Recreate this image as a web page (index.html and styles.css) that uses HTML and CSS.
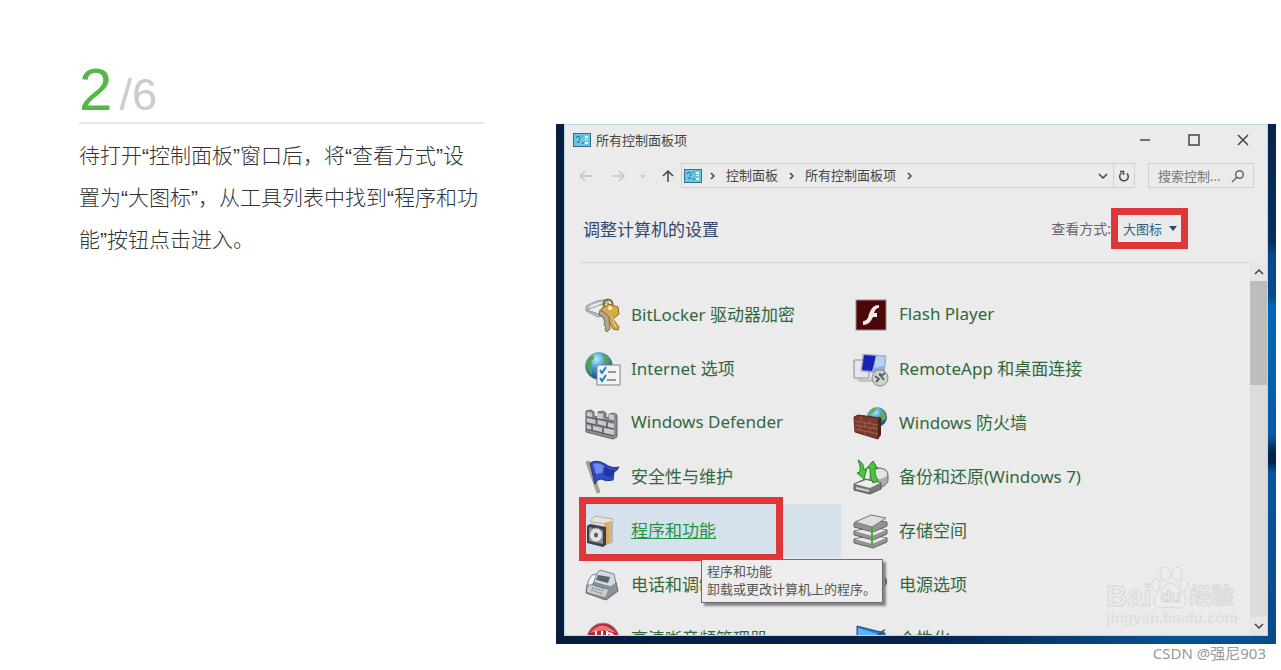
FILE: index.html
```html
<!DOCTYPE html>
<html lang="zh-CN">
  <head>
    <meta charset="UTF-8" />
    <meta name="viewport" content="width=device-width, initial-scale=1.0" />
    <title>2/6 控制面板</title>
    <link rel="stylesheet" href="styles.css">
  </head>
  <body>
    <main class="step">
      <section class="step-text">
        <h1 class="step-number">2<span>/6</span></h1>
        <p>待打开“控制面板”窗口后，将“查看方式”设置为“大图标”，从工具列表中找到“程序和功能”按钮点击进入。</p>
      </section>

      <figure class="step-figure">
        <div class="desktop">
          <div class="window">
            <header class="titlebar">
              <svg class="panel-icon" viewBox="0 0 18 14">
                <rect x=".5" y=".5" width="17" height="13" fill="#6cc5e2" stroke="#356f8c" />
                <path d="M3 5a2 2 0 1 1 3 2M4 9h3M9 3h1M9 10h2" stroke="#175b80" fill="none" />
                <path d="M12 3h3v2h-3zM12 6h3v1h-3zM12 9h3v2h-3z" fill="#e2f7fc" />
              </svg>
              <h2>所有控制面板项</h2>
              <div class="window-buttons">
                <button aria-label="最小化"><svg viewBox="0 0 12 12"><path d="M1 6h10" /></svg></button>
                <button aria-label="最大化"><svg viewBox="0 0 12 12"><path d="M1 1h10v10H1z" /></svg></button>
                <button aria-label="关闭"><svg viewBox="0 0 12 12"><path d="M1 1l10 10M11 1L1 11" /></svg></button>
              </div>
            </header>

            <div class="toolbar">
              <div class="history">
                <button class="off" aria-label="后退"><svg viewBox="0 0 14 14"><path d="M13 7H1M6 2L1 7l5 5" /></svg></button>
                <button class="off" aria-label="前进"><svg viewBox="0 0 14 14"><path d="M1 7h12M8 2l5 5-5 5" /></svg></button>
                <button class="off recent" aria-label="最近"><svg viewBox="0 0 6 14"><path d="M1 6l2 2 2-2" /></svg></button>
                <button aria-label="向上"><svg viewBox="0 0 14 14"><path d="M7 13V2M2 7l5-5 5 5" /></svg></button>
              </div>
              <div class="address">
                <svg class="panel-icon" viewBox="0 0 18 14">
                  <rect x=".5" y=".5" width="17" height="13" fill="#6cc5e2" stroke="#356f8c" />
                  <path d="M3 5a2 2 0 1 1 3 2M4 9h3M9 3h1M9 10h2" stroke="#175b80" fill="none" />
                  <path d="M12 3h3v2h-3zM12 6h3v1h-3zM12 9h3v2h-3z" fill="#e2f7fc" />
                </svg>
                <nav class="crumbs">
                  <svg class="chev" viewBox="0 0 5 8"><path d="M1 1l3 3-3 3" /></svg>
                  <a href="#">控制面板</a>
                  <svg class="chev" viewBox="0 0 5 8"><path d="M1 1l3 3-3 3" /></svg>
                  <a href="#">所有控制面板项</a>
                  <svg class="chev" viewBox="0 0 5 8"><path d="M1 1l3 3-3 3" /></svg>
                </nav>
                <button class="drop" aria-label="历史记录"><svg viewBox="0 0 12 12"><path d="M2 4l4 4 4-4" /></svg></button>
                <button class="refresh" aria-label="刷新"><svg viewBox="0 0 12 12"><path d="M9 3.500A4.300 4.300 0 1 1 3.500 3M2 1.500h3.500V5" /></svg></button>
              </div>
              <label class="search">
                <input type="text" placeholder="搜索控制..." aria-label="搜索控制面板">
                <svg viewBox="0 0 14 14"><circle cx="8.500" cy="5.500" r="3.800" /><path d="M5.800 8.200L1 13" /></svg>
              </label>
            </div>

            <div class="heading">
              <h3>调整计算机的设置</h3>
              <label for="view">查看方式:</label>
              <div class="view-box">
                <select id="view">
                  <option>大图标</option>
                </select>
                <svg viewBox="0 0 8 5"><path d="M0 0h8L4 5z" /></svg>
              </div>
            </div>

            <div class="content">
              <ul class="items">
                <li>
                  <a href="#">
                    <svg viewBox="0 0 36 36">
                      <path d="M3 8Q14 2 22 3l2 3Q12 8 2 13l12 4 8-2-1 4-8 1L1 14V9z" fill="#b9bbbd" stroke="#85888b" stroke-width=".7" />
                      <path d="M5 9Q13 5 20 5L5 11z" fill="#f0f0f0" />
                      <circle cx="23" cy="7" r="4.500" fill="none" stroke="#80682c" stroke-width="2" />
                      <path d="M16 12l8-5 9 3 1 7-6 5 6 8-1 3-5-1-5-10-7-3z" fill="#d3aa4c" stroke="#8b6722" />
                      <path d="M20 16l4 4 1 12-3 3-2-2 1-3-2-2 1-3-2-5-4-2 1-5z" fill="#b5a78a" stroke="#79694d" />
                      <circle cx="25" cy="11" r="2" fill="#fff0b0" />
                      <path d="M27 20l4 10" stroke="#f5da83" />
                    </svg>
                    <span>BitLocker 驱动器加密</span>
                  </a>
                </li>
                <li>
                  <a href="#">
                    <svg viewBox="0 0 36 36">
                      <rect x="3" y="3" width="30" height="30" fill="#4d070b" stroke="#a28889" />
                      <path d="M26 8c-6 0-8 4-10 9-1 5-3 7-6 7v4c6 0 8-4 10-8h4v-4h-3c1-3 2-5 5-5z" fill="#f2e8e5" />
                    </svg>
                    <span>Flash Player</span>
                  </a>
                </li>
                <li>
                  <a href="#">
                    <svg viewBox="0 0 36 36">
                      <defs>
                        <radialGradient id="globe" cx=".4" cy=".25" r=".8">
                          <stop offset="0" stop-color="#b7ecff" />
                          <stop offset=".45" stop-color="#3d96c6" />
                          <stop offset="1" stop-color="#123d78" />
                        </radialGradient>
                      </defs>
                      <circle cx="14" cy="15" r="13.500" fill="url(#globe)" stroke="#5f839a" stroke-width=".5" />
                      <path d="M2 11q2-5 6-7l1 4-3 2 1 4-3 2 3 3v5q-6-6-5-13zM18 3l5 3 2 5-4 1-2-3 1-2-3-2z" fill="#58a33e" />
                      <path d="M12 14h23v20H12z" fill="#f3f4f5" stroke="#7c8287" />
                      <path d="M15 19l2 3 4-6M15 27l2 3 4-6" fill="none" stroke="#1d7cc2" stroke-width="2" />
                      <path d="M23 21h8M22 29h9" stroke="#73777b" stroke-width="1.500" />
                    </svg>
                    <span>Internet 选项</span>
                  </a>
                </li>
                <li>
                  <a href="#">
                    <svg viewBox="0 0 36 36">
                      <path d="M1 9h15v18H1z" fill="#e4e6ec" stroke="#8b8d96" />
                      <path d="M3 28h18l4 3H6z" fill="#c1c3c9" />
                      <path d="M10 3l23 2-2 18-23-3z" fill="#8fa9df" stroke="#a9afbb" />
                      <path d="M11 4l12 1-4 15-10-1z" fill="#1822b5" />
                      <path d="M23 5l9 1-1 9-10 2z" fill="#b9d1f4" />
                      <circle cx="27" cy="27" r="8" fill="#d1d2cd" stroke="#888b85" />
                      <path d="M22 25l4 3-3 3M32 22l-4 3 3 4M27 22v3" fill="none" stroke="#555a54" stroke-width="1.800" />
                    </svg>
                    <span>RemoteApp 和桌面连接</span>
                  </a>
                </li>
                <li>
                  <a href="#">
                    <svg viewBox="0 0 36 36">
                      <path d="M1 6l5-1 3 2v4l4 1V7l5-1 3 2v4l3 1V9l5-1 3 2v22l-4 2L1 27z" fill="#8b8c91" stroke="#65666b" />
                      <path d="M2 7l5 1v4l-5-1zM12 8l6 1v5l-6-1zM24 9l5 1v5l-5-1zM2 13l9 2v4l-9-2zM13 15l8 2v4l-8-2zM23 18l6 1v4l-6-1zM2 20l4 1v4l-4-1zM8 21l9 2v4l-9-2zM19 23l10 2v5l-10-2z" fill="#c9cacf" />
                      <path d="M1 12l28 5M1 18l28 6M1 24l28 7M11 13v6M22 17v6M7 19v6M18 23v6" stroke="#55565b" />
                    </svg>
                    <span>Windows Defender</span>
                  </a>
                </li>
                <li>
                  <a href="#">
                    <svg viewBox="0 0 36 36">
                      <circle cx="24" cy="12" r="10" fill="url(#globe)" />
                      <path d="M16 7q4-5 8-4l-2 4-4 2zM29 5q4 4 4 8l-3 3-3-5z" fill="#69ad4f" />
                      <path d="M1 12l4-2 23 3-3 21L2 27z" fill="#7c392c" stroke="#572920" />
                      <path d="M25 14l3-1v17l-3 4z" fill="#4b231d" />
                      <path d="M2 16l23 4M2 20l23 4M2 24l23 5M8 12v4M17 14v4M12 18v4M21 20v4M7 21v4M17 23v4M12 26v4" stroke="#b67c6a" stroke-width=".6" />
                    </svg>
                    <span>Windows 防火墙</span>
                  </a>
                </li>
                <li>
                  <a href="#">
                    <svg viewBox="0 0 36 36">
                      <path d="M1 3l3-1 11 31-3 1z" fill="#a4a698" stroke="#777b6d" stroke-width=".6" />
                      <path d="M5 4q7-4 15 1 7 5 14 3-2 4-5 5l-1 8q-7 2-12-1-4 0-6 5z" fill="#314bc0" stroke="#23347d" />
                      <path d="M8 5q6-2 11 2l-2 7-6 1z" fill="#7088ed" />
                      <path d="M20 8q6 4 10 3l-4 7q-4 0-7-3z" fill="#1d34a1" />
                    </svg>
                    <span>安全性与维护</span>
                  </a>
                </li>
                <li>
                  <a href="#">
                    <svg viewBox="0 0 36 36">
                      <path d="M18 14q0-5 9-5 8 1 8 7v6q-2 6-10 7l-9-5z" fill="#a9aba8" stroke="#717470" />
                      <ellipse cx="26" cy="15" rx="8" ry="5" fill="#e4e5e3" />
                      <path d="M1 25l11-5 16 4v6l-11 5-16-4z" fill="#777a78" stroke="#565957" />
                      <path d="M2 25l11-4 14 3-10 5z" fill="#ededeb" />
                      <path d="M3 28l13 3v2L3 30z" fill="#d1d3d1" />
                      <path d="M5 1q6 3 6 10l3-2-3 11-7-6 3-1q1-6-2-12z" fill="#4cc43c" stroke="#298527" />
                      <path d="M14 9l6-7 5 8-3-1q-1 6 3 13l-5 2q-4-7-3-15z" fill="#4cc43c" stroke="#298527" />
                    </svg>
                    <span>备份和还原(Windows 7)</span>
                  </a>
                </li>
                <li class="selected">
                  <a href="#" aria-describedby="tip">
                    <svg viewBox="0 0 36 36">
                      <path d="M6 7l4-4 18 3v4l-4-1v2L6 9z" fill="#e7e3d8" stroke="#999a95" stroke-width=".7" />
                      <path d="M19 10l8-2v22l-6 2z" fill="#e0a85a" />
                      <path d="M24 10l4-1v20l-4 2z" fill="#bdb8ae" />
                      <path d="M2 13l3-2 16 3v18l-3 2-16-4z" fill="#3b4145" />
                      <path d="M4 14l14 3v14L4 28z" fill="#8b9092" />
                      <ellipse cx="11" cy="22" rx="6.500" ry="7" fill="#e2e5e5" stroke="#858c8f" />
                      <ellipse cx="11" cy="22" rx="2" ry="2.500" fill="#555f64" />
                    </svg>
                    <span>程序和功能</span>
                  </a>
                  <div class="marker"></div>
                  <div class="tooltip" id="tip" role="tooltip">程序和功能<br>卸载或更改计算机上的程序。</div>
                </li>
                <li>
                  <a href="#">
                    <svg viewBox="0 0 36 36">
                      <path d="M1 26l19-4 14 3v4l-14 6-19-5z" fill="#929492" stroke="#656965" />
                      <path d="M2 26l18-3 13 2-14 6z" fill="#e8e9e8" />
                      <path d="M1 18l19-4 14 3v4l-14 6-19-5z" fill="#929492" stroke="#656965" />
                      <path d="M2 18l18-3 13 2-14 6z" fill="#e8e9e8" />
                      <path d="M1 10l19-4 14 3v4l-14 6-19-5z" fill="#929492" stroke="#656965" />
                      <path d="M2 9l16-7 15 3-14 9z" fill="#dedfde" stroke="#777a77" />
                      <path d="M18 13l2 1v20l-2-1z" fill="#4caf3d" />
                    </svg>
                    <span>存储空间</span>
                  </a>
                </li>
                <li>
                  <a href="#">
                    <svg viewBox="0 0 36 36">
                      <path d="M2 18l8-10 21 7 2 9-12 9L1 26z" fill="#8a9297" stroke="#60696f" />
                      <path d="M9 9l6-6 14 4 2 9-5 4-18-5z" fill="#d2dadd" stroke="#79838a" />
                      <path d="M13 8l12 2-2 6-12-3z" fill="#56666f" />
                      <path d="M3 17l20 6-3 7-18-5z" fill="#cbd1d4" />
                      <path d="M8 18l12 4M7 21l12 3M6 23l12 4" stroke="#68747c" stroke-dasharray="2 1" />
                      <path d="M3 14l4-6 5-1-4 10-5 2z" fill="#f0f2f3" stroke="#7c878e" />
                    </svg>
                    <span>电话和调制解调器</span>
                  </a>
                </li>
                <li>
                  <a href="#">
                    <svg viewBox="0 0 36 36">
                      <path d="M4 12h18v17H4z" fill="#7c9b4b" />
                      <path d="M25 8q8 1 8 7-1 6-8 6" fill="#53585b" stroke="#25292b" stroke-width="2" />
                    </svg>
                    <span>电源选项</span>
                  </a>
                </li>
                <li>
                  <a href="#">
                    <svg viewBox="0 0 36 36">
                      <circle cx="18" cy="18" r="16" fill="#bd2630" stroke="#919091" />
                      <path d="M5 12Q17-3 31 12 18 7 5 12" fill="#e1797d" />
                      <path d="M11 10v14M11 17h6M17 10v14M22 10v12M22 12q7 0 7 6t-5 6" fill="none" stroke="#fff" stroke-width="2" />
                    </svg>
                    <span>高清晰音频管理器</span>
                  </a>
                </li>
                <li>
                  <a href="#">
                    <svg viewBox="0 0 36 36">
                      <path d="M4 5l28 7v19L4 27z" fill="#2879d4" stroke="#214e8b" />
                      <path d="M5 7l20 6L10 25H5z" fill="#61b4ed" />
                      <path d="M33 8q-8 2-14 14l3 1Q27 15 33 8z" fill="#42535c" />
                    </svg>
                    <span>个性化</span>
                  </a>
                </li>
              </ul>
              <div class="scrollbar">
                <button aria-label="向上滚动"><svg viewBox="0 0 10 8"><path d="M1 6l4-4 4 4" /></svg></button>
                <div class="thumb"></div>
                <button aria-label="向下滚动"><svg viewBox="0 0 10 8"><path d="M1 2l4 4 4-4" /></svg></button>
              </div>
            </div>
          </div>

          <div class="watermark">
            <div class="watermark-logo">
              <span>Bai</span>
              <span class="paw">
                <svg viewBox="0 0 38 44">
                  <ellipse cx="14" cy="8" rx="5" ry="7" />
                  <ellipse cx="26" cy="8" rx="5" ry="7" />
                  <ellipse cx="5" cy="19" rx="4" ry="6" />
                  <ellipse cx="33" cy="19" rx="4" ry="6" />
                  <path d="M19 17q5 0 8 6 8 6 8 12-1 8-9 7-7-2-14 0-9 0-9-8 1-6 8-11 3-6 8-6z" />
                </svg>
                <b>du</b>
              </span>
              <span class="exp">经验</span>
            </div>
            <div class="watermark-url">jingyan.baidu.com</div>
          </div>
        </div>
        <figcaption>CSDN @强尼903</figcaption>
      </figure>
    </main>
  </body>
</html>
```

FILE: styles.css
```css
* {
  box-sizing: border-box;
}
body {
  margin: 0;
  background: #fff;
  color: #333;
  font-family: "Liberation Sans", "Noto Sans CJK SC", sans-serif;
}
h1, h2, h3, p, ul, figure {
  margin: 0;
  padding: 0;
  font-weight: normal;
}
a {
  color: inherit;
  text-decoration: none;
}
button {
  display: flex;
  align-items: center;
  justify-content: center;
  padding: 0;
  border: 0;
  background: none;
  color: #444;
}
svg {
  display: block;
  flex-shrink: 0;
}

.step {
  display: grid;
  grid-template-columns: 405fr 720fr;
  gap: 72px;
  align-items: start;
  padding: 0 5px 0 79px;
}
.step-text {
  padding-top: 60px;
}
.step-number {
  padding-bottom: 2px;
  border-bottom: 2px solid #e6e6e6;
  color: #54b848;
  font-size: 60px;
  line-height: 60px;
}
.step-number span {
  margin-left: 7px;
  color: #ccc;
  font-size: 45px;
  line-height: 1;
}
.step-text p {
  margin-top: 11px;
  font-size: 21px;
  font-weight: 300;
  line-height: 42px;
}
.step-figure {
  padding-top: 124px;
}
.step-figure figcaption {
  padding-right: 10px;
  color: #999;
  font: 15px/18px "Noto Sans", "Noto Sans CJK SC", sans-serif;
  text-align: right;
}

/* desktop behind the window */
.desktop {
  position: relative;
  display: flex;
  aspect-ratio: 18 / 13;
  padding: 0 8px 8px;
  background:
    linear-gradient(#06254d, #07305f 23%, #07498b 25%, #07498b 33%, #0067b8 35%, #075ba7 60%, #04244b 63%, #04244b 65%, #0755a0 67%, #064a8b) right / 8px 100% no-repeat,
    linear-gradient(90deg, #061d42, #06234b 50%, #07508f 85%);
}
.window {
  display: flex;
  flex: 1;
  flex-direction: column;
  min-width: 0;
  border: 1px solid #b4d9df;
  background: #ebebeb;
  color: #444;
  font-family: "Noto Sans", "Noto Sans CJK SC", sans-serif;
}
.panel-icon {
  width: 18px;
  height: 14px;
}
.titlebar {
  display: flex;
  align-items: center;
  gap: 5px;
  height: 30px;
  padding: 0 12px 0 8px;
}
.titlebar h2 {
  flex: 1;
  padding-bottom: 2px;
  font-size: 13px;
}
.window-buttons {
  display: flex;
  gap: 25px;
}
.window-buttons button {
  width: 24px;
  height: 24px;
}
.window-buttons svg {
  width: 12px;
  height: 12px;
}
.window button svg,
.chev,
.search svg {
  fill: none;
  stroke: currentColor;
  stroke-width: 1.5;
}

.toolbar {
  display: flex;
  align-items: center;
  gap: 13px;
  padding: 8px 13px 0 14px;
}
.history {
  display: flex;
  align-items: center;
  gap: 18px;
  margin-right: -7px;
}
.history svg {
  width: 14px;
  height: 14px;
}
.history .recent svg {
  width: 6px;
}
.history .recent {
  margin: 0 -3px;
}
.history .off {
  color: #c4c4c4;
}
.address,
.search {
  display: flex;
  align-items: center;
  height: 25px;
  border: 1px solid #d0d0d0;
}
.address {
  flex: 1;
  padding-left: 2px;
}
.crumbs {
  display: flex;
  flex: 1;
  align-items: center;
  gap: 11px;
  padding-left: 8px;
  font-size: 13px;
}
.crumbs a {
  padding-bottom: 2px;
}
.chev {
  width: 5px;
  height: 8px;
}
.address button {
  width: 21px;
  height: 23px;
}
.address button svg {
  width: 12px;
  height: 12px;
}
.address .refresh {
  border-left: 1px solid #d0d0d0;
}
.search {
  width: 106px;
  padding: 0 8px 0 9px;
  color: #666;
}
.search input {
  flex: 1;
  width: 0;
  padding: 0;
  border: 0;
  background: none;
  font: 13px "Noto Sans", "Noto Sans CJK SC", sans-serif;
}
.search input::placeholder {
  color: #777;
}
.search svg {
  width: 14px;
  height: 14px;
}

.heading {
  display: flex;
  align-items: center;
  margin: 0 17px 0 15px;
  padding: 20px 62px 13px 3px;
  border-bottom: 1px solid #d2d2d2;
}
.heading h3 {
  flex: 1;
  color: #34466f;
  font-size: 17px;
}
.heading label {
  padding-bottom: 2px;
  color: #666;
  font-size: 14px;
}
.view-box {
  display: flex;
  align-items: center;
  width: 77px;
  height: 41px;
  border: 7px solid #e0363a;
}
.view-box select {
  flex: 1;
  width: 0;
  padding: 0 0 0 5px;
  border: 0;
  appearance: none;
  background: none;
  color: #2d6184;
  font: 13px "Noto Sans", "Noto Sans CJK SC", sans-serif;
}
.view-box svg {
  width: 8px;
  height: 5px;
  margin-right: 4px;
  fill: #2b4c6b;
}

.content {
  display: flex;
  flex: 1;
  min-height: 0;
}
.items {
  display: grid;
  flex: 1;
  grid-template-columns: 261px 1fr;
  grid-auto-rows: 54px;
  column-gap: 7px;
  padding: 25px 0 0 15px;
  overflow: hidden;
  list-style: none;
}
.items li {
  position: relative;
}
.items a {
  display: flex;
  align-items: center;
  gap: 10px;
  height: 54px;
  padding-left: 5px;
  color: #31693b;
  font-size: 17px;
  white-space: nowrap;
}
.items a span {
  padding-bottom: 3px;
}
.items a svg {
  width: 36px;
  height: 36px;
}
.items .selected {
  z-index: 1;
  background: #d5e1eb;
}
.items .selected a {
  color: #239447;
  text-decoration: underline;
}
.marker {
  position: absolute;
  top: -7px;
  left: -1px;
  width: 204px;
  height: 64px;
  border: 7px solid #e0363a;
}
.tooltip {
  position: absolute;
  top: 55px;
  left: 121px;
  padding: 2px 6px 4px 5px;
  border: 1px solid #6b6b6b;
  background: #ededed;
  box-shadow: 3px 3px 2px #888;
  color: #555;
  font-size: 13px;
  line-height: 18px;
  white-space: nowrap;
}

.scrollbar {
  display: flex;
  flex-direction: column;
  width: 17px;
  background: #dcdcdc;
}
.scrollbar button {
  height: 18px;
  background: #e6e6e6;
}
.scrollbar svg {
  width: 10px;
  height: 8px;
}
.scrollbar .thumb {
  height: 104px;
  margin-bottom: auto;
  background: #bdbdbd;
}

.watermark {
  position: absolute;
  right: 38px;
  bottom: 18px;
  color: #ebebeb;
  font-family: "Liberation Sans", "Noto Sans CJK SC", sans-serif;
  font-weight: bold;
  -webkit-text-stroke: 1px #d6d6d6;
}
.watermark-logo {
  display: flex;
  align-items: flex-end;
  font-size: 29px;
  line-height: 28px;
}
.paw {
  position: relative;
}
.paw svg {
  width: 38px;
  height: 44px;
  fill: #ededed;
  stroke: #d6d6d6;
}
.paw b {
  position: absolute;
  bottom: 3px;
  left: 9px;
  font-size: 17px;
  line-height: 20px;
}
.watermark .exp {
  font-size: 22px;
}
.watermark-url {
  color: #dedede;
  font-size: 15px;
  line-height: 16px;
  -webkit-text-stroke: 0;
}
```
